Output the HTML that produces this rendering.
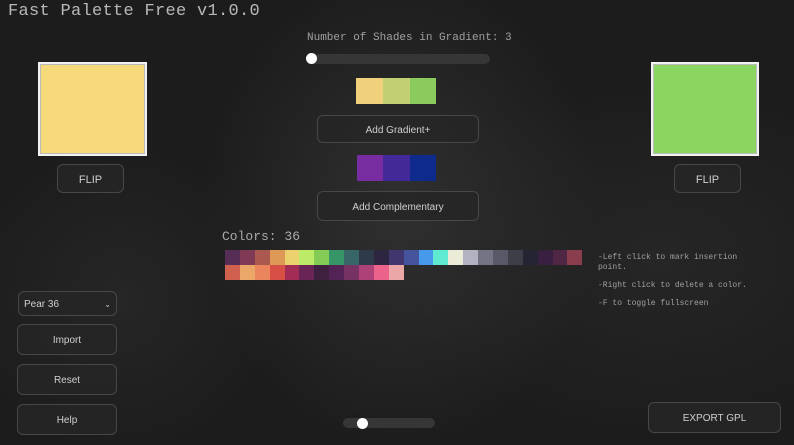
<!DOCTYPE html>
<html><head><meta charset="utf-8"><style>
*{margin:0;padding:0;box-sizing:border-box}
body{width:794px;height:445px;overflow:hidden;position:relative;font-family:"Liberation Mono",monospace;
background:radial-gradient(ellipse 200px 240px at 400px 210px,#303030,rgba(0,0,0,0)),radial-gradient(ellipse 260px 180px at 660px 260px,#262626,rgba(0,0,0,0)),radial-gradient(ellipse 160px 160px at 120px 300px,#262626,rgba(0,0,0,0)),#1c1c1c;}
.a{position:absolute}
.btn{position:absolute;background:rgba(38,38,38,.85);border:1px solid #474747;border-radius:6px;color:#cfcfcf;font-family:"Liberation Sans",sans-serif;font-size:10px;display:flex;align-items:center;justify-content:center;padding-top:2px}
.t{position:absolute;color:#a0a0a0;white-space:nowrap}
.track{position:absolute;background:#363636;border-radius:6px;height:10px}
.knob{position:absolute;width:11px;height:11px;border-radius:50%;background:#fff}
.row{position:absolute;display:flex;height:15px;filter:brightness(0.92)}
.row div{width:14.9px;height:15px}
</style></head><body>
<div class="t" style="left:8px;top:2px;font-size:17px;color:#b8b8b8;font-weight:300;letter-spacing:0.3px">Fast Palette Free v1.0.0</div>
<div class="t" style="left:307px;top:32px;font-size:11px">Number of Shades in Gradient: 3</div>
<div class="track" style="left:307px;top:54px;width:183px"></div>
<div class="knob" style="left:306px;top:53px"></div>

<div class="a" style="left:38px;top:62px;width:109px;height:94px;background:#f2f2f2;padding:2px"><div style="width:100%;height:100%;background:#f6d978;border:1px solid #bbb"></div></div>
<div class="btn" style="left:57px;top:164px;width:67px;height:29px;font-size:11px">FLIP</div>
<div class="a" style="left:651px;top:62px;width:108px;height:94px;background:#f2f2f2;padding:2px"><div style="width:100%;height:100%;background:#8bd561;border:1px solid #bbb"></div></div>
<div class="btn" style="left:674px;top:164px;width:67px;height:29px;font-size:11px">FLIP</div>

<div class="a" style="left:356px;top:78px;display:flex;height:26px"><div style="width:27px;background:#f0d07a"></div><div style="width:27px;background:#c2cf72"></div><div style="width:26px;background:#8bca5c"></div></div>
<div class="btn" style="left:317px;top:115px;width:162px;height:28px">Add Gradient+</div>
<div class="a" style="left:357px;top:155px;display:flex;height:26px"><div style="width:26px;background:#772da0"></div><div style="width:27px;background:#432898"></div><div style="width:26px;background:#0d2a8c"></div></div>
<div class="btn" style="left:317px;top:191px;width:162px;height:30px">Add Complementary</div>

<div class="t" style="left:222px;top:229px;font-size:13px;color:#aaa">Colors: 36</div>
<div class="row" style="left:225px;top:250px">
<div style="background:#5e315b"></div><div style="background:#8c3f5d"></div><div style="background:#ba6156"></div><div style="background:#f2a65e"></div><div style="background:#ffe478"></div><div style="background:#cfff70"></div><div style="background:#8fde5d"></div><div style="background:#3ca370"></div><div style="background:#3d6e70"></div><div style="background:#323e4f"></div><div style="background:#322947"></div><div style="background:#473b78"></div><div style="background:#4b5bab"></div><div style="background:#4da6ff"></div><div style="background:#66ffe3"></div><div style="background:#ffffeb"></div><div style="background:#c2c2d1"></div><div style="background:#7e7e8f"></div><div style="background:#606070"></div><div style="background:#43434f"></div><div style="background:#272736"></div><div style="background:#3e2347"></div><div style="background:#57294b"></div><div style="background:#964253"></div>
</div>
<div class="row" style="left:225px;top:265px">
<div style="background:#e36956"></div><div style="background:#ffb570"></div><div style="background:#ff9166"></div><div style="background:#eb564b"></div><div style="background:#b0305c"></div><div style="background:#73275c"></div><div style="background:#422445"></div><div style="background:#5a265e"></div><div style="background:#80366b"></div><div style="background:#bd4882"></div><div style="background:#ff6b97"></div><div style="background:#ffb5b5"></div>
</div>

<div class="t" style="left:598px;top:253px;font-size:8px;line-height:10px">-Left click to mark insertion<br>point.</div>
<div class="t" style="left:598px;top:281px;font-size:8px">-Right click to delete a color.</div>
<div class="t" style="left:598px;top:299px;font-size:8px">-F to toggle fullscreen</div>

<div class="btn" style="left:18px;top:291px;width:99px;height:25px;justify-content:flex-start;padding-left:5px">Pear 36<span style="position:absolute;right:5px;font-size:8px">&#8964;</span></div>
<div class="btn" style="left:17px;top:324px;width:100px;height:31px">Import</div>
<div class="btn" style="left:17px;top:364px;width:100px;height:31px">Reset</div>
<div class="btn" style="left:17px;top:404px;width:100px;height:31px">Help</div>

<div class="track" style="left:343px;top:418px;width:92px"></div>
<div class="knob" style="left:357px;top:418px"></div>
<div class="btn" style="left:648px;top:402px;width:133px;height:31px">EXPORT GPL</div>
</body></html>
